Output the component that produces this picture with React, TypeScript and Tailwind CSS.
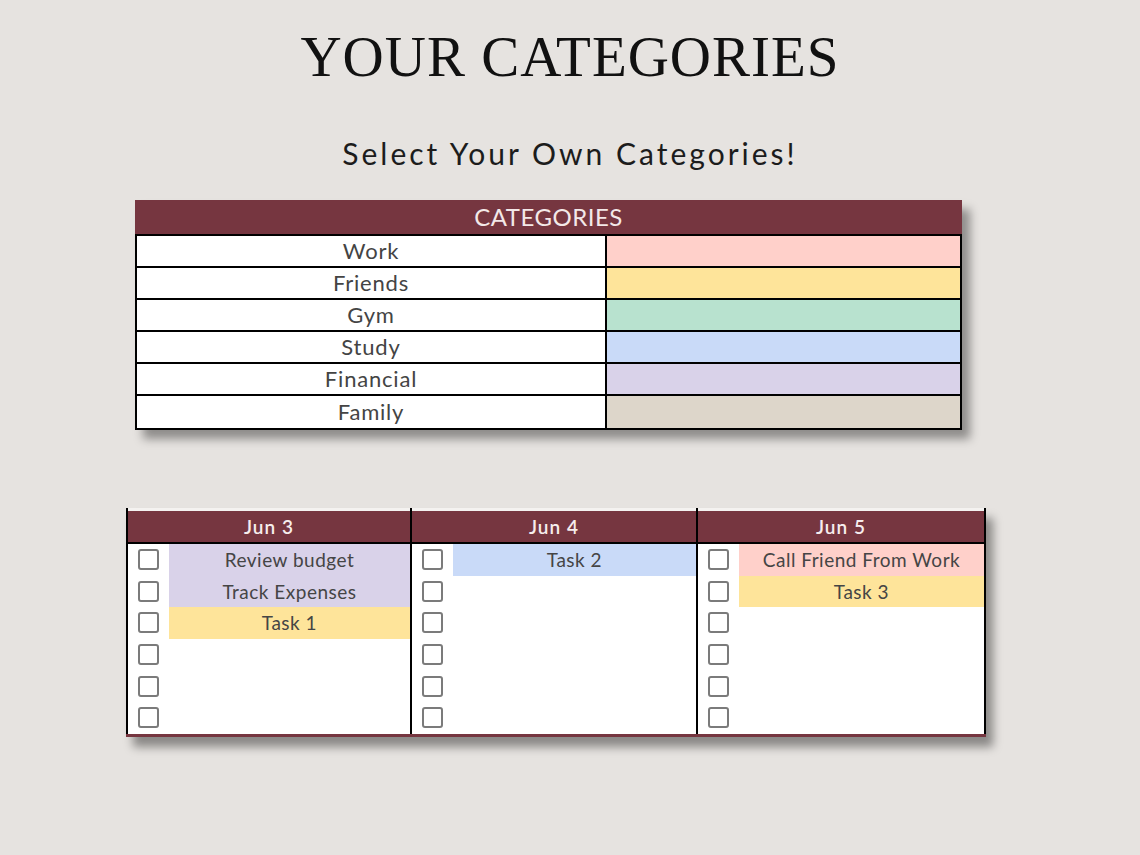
import React from "react";

const categories = [
  { name: "Work", color: "bg-[#ffd0ca]" },
  { name: "Friends", color: "bg-[#fee49a]" },
  { name: "Gym", color: "bg-[#b8e2cf]" },
  { name: "Study", color: "bg-[#c9daf8]" },
  { name: "Financial", color: "bg-[#d9d2e9]" },
  { name: "Family", color: "bg-[#ddd6ca]" },
];

type Task = { label: string; color: string } | null;

const days: { date: string; tasks: Task[] }[] = [
  {
    date: "Jun 3",
    tasks: [
      { label: "Review budget", color: "bg-[#d9d2e9]" },
      { label: "Track Expenses", color: "bg-[#d9d2e9]" },
      { label: "Task 1", color: "bg-[#fee49a]" },
      null,
      null,
      null,
    ],
  },
  {
    date: "Jun 4",
    tasks: [{ label: "Task 2", color: "bg-[#c9daf8]" }, null, null, null, null, null],
  },
  {
    date: "Jun 5",
    tasks: [
      { label: "Call Friend From Work", color: "bg-[#ffd0ca]" },
      { label: "Task 3", color: "bg-[#fee49a]" },
      null,
      null,
      null,
      null,
    ],
  },
];

const rounded = { fontFamily: "Lato, 'Noto Sans', sans-serif" };

function DayColumn({ date, tasks, first }: { date: string; tasks: Task[]; first?: boolean }) {
  return (
    <div className={`flex flex-col bg-white border-r-2 border-black ${first ? "border-l-2" : ""}`}>
      <div className="h-[3px] bg-[#f4f2f0]" />
      <div className="h-[33px] bg-[#763640] border-b-2 border-black flex items-center justify-center text-[19px] leading-none tracking-[1px] font-semibold text-[#f6eded]">
        {date}
      </div>
      {tasks.map((t, i) => (
        <div key={i} className="flex h-[31.6px]">
          <div className="w-[41px] shrink-0 flex items-center justify-center">
            <div className="w-[21px] h-[21px] rounded-[3px] border-2 border-[#7b7b7b]" />
          </div>
          <div
            className={`flex-1 flex items-center justify-center text-[19px] leading-none tracking-[0.5px] text-[#454545] ${t ? t.color : ""}`}
          >
            {t?.label}
          </div>
        </div>
      ))}
    </div>
  );
}

export default function App() {
  return (
    <div className="w-[1140px] h-[855px] bg-[#e6e3e0] overflow-hidden" style={rounded}>
      <h1
        className="pt-[28px] text-center text-[57px] leading-none tracking-[1px] text-[#111]"
        style={{ fontFamily: "'Liberation Serif', 'DejaVu Serif', serif" }}
      >
        YOUR CATEGORIES
      </h1>
      <p className="mt-[53px] text-center text-[30px] leading-none tracking-[3px] text-[#1c1c1c]">
        Select Your Own Categories!
      </p>

      {/* Categories table */}
      <div className="mt-[32px] ml-[135px] w-[827px] shadow-[8px_9px_9px_rgba(0,0,0,0.38)]">
        <div className="h-[34px] bg-[#763640] flex items-center justify-center text-[24px] leading-none tracking-[0.5px] text-[#f3e8e8]">
          CATEGORIES
        </div>
        <div className="border-2 border-black bg-white">
          {categories.map((c, i) => (
            <div
              key={c.name}
              className={`grid grid-cols-[470px_1fr] h-[32px] overflow-hidden ${i < categories.length - 1 ? "border-b-2 border-black" : ""}`}
            >
              <div className="flex items-center justify-center border-r-2 border-black text-[22px] leading-none tracking-[0.8px] text-[#444]">
                {c.name}
              </div>
              <div className={c.color} />
            </div>
          ))}
        </div>
      </div>

      {/* Day planner */}
      <div className="mt-[78px] ml-[126px] w-[860px] shadow-[7px_10px_9px_rgba(0,0,0,0.4)]">
        <div className="grid grid-cols-[286px_286px_288px]">
          {days.map((d, i) => (
            <DayColumn key={d.date} date={d.date} tasks={d.tasks} first={i === 0} />
          ))}
        </div>
        <div className="h-[3px] bg-[#763640]" />
      </div>
    </div>
  );
}
